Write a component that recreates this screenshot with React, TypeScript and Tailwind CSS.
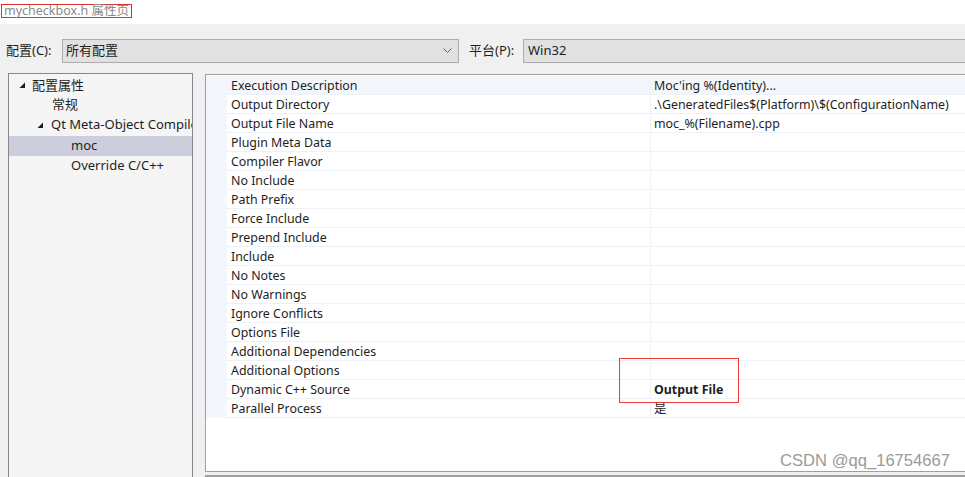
import React from "react";

const rows: { name: string; value?: string; bold?: boolean }[] = [
  { name: "Execution Description", value: "Moc'ing %(Identity)..." },
  { name: "Output Directory", value: ".\\GeneratedFiles$(Platform)\\$(ConfigurationName)" },
  { name: "Output File Name", value: "moc_%(Filename).cpp" },
  { name: "Plugin Meta Data" },
  { name: "Compiler Flavor" },
  { name: "No Include" },
  { name: "Path Prefix" },
  { name: "Force Include" },
  { name: "Prepend Include" },
  { name: "Include" },
  { name: "No Notes" },
  { name: "No Warnings" },
  { name: "Ignore Conflicts" },
  { name: "Options File" },
  { name: "Additional Dependencies" },
  { name: "Additional Options" },
  { name: "Dynamic C++ Source", value: "Output File", bold: true },
  { name: "Parallel Process", value: "是" },
];

function Tri() {
  return (
    <svg width="7" height="7" viewBox="0 0 7 7" className="shrink-0">
      <polygon points="6,0.5 6,6 0.5,6" fill="#1e1e1e" />
    </svg>
  );
}

export default function App() {
  return (
    <div
      className="relative w-[965px] h-[477px] overflow-hidden bg-[#f0f0f0] text-[13px] text-[#1e1e1e]"
      style={{ fontFamily: '"Noto Sans", "Noto Sans CJK SC", sans-serif' }}
    >
      {/* title bar */}
      <div className="h-[24px] bg-white flex items-start pl-[1px] pt-[4px]">
        <div className="border border-[#e03030] h-[14px] w-[131px] flex items-center pl-[2px] text-[12.5px] leading-[12px] text-[#8a8a8a] whitespace-nowrap">
          mycheckbox.h 属性页
        </div>
      </div>

      {/* configuration row */}
      <div className="h-[49px] flex items-start pt-[15px]">
        <div className="w-[62px] pl-[6px] h-[24px] flex items-center">配置(C):</div>
        <div className="w-[397px] h-[24px] border border-[#adadad] bg-[#e1e1e1] flex items-center pl-[3px] pr-[6px] justify-between">
          <span>所有配置</span>
          <svg width="9" height="6" viewBox="0 0 9 6">
            <polyline points="0.5,0.5 4.5,4.5 8.5,0.5" fill="none" stroke="#606060" strokeWidth="1" />
          </svg>
        </div>
        <div className="w-[64px] pl-[10px] h-[24px] flex items-center">平台(P):</div>
        <div className="flex-1 h-[24px] border border-r-0 border-[#adadad] bg-[#e1e1e1] flex items-center pl-[4px]">
          Win32
        </div>
      </div>

      {/* main area */}
      <div className="flex h-[404px]">
        {/* tree */}
        <div className="ml-[8px] w-[185px] h-full border border-b-0 border-[#828790] bg-[#f5f5f5] pt-[2px]">
          <div className="h-[19px] flex items-center pl-[10px] gap-[6px]">
            <Tri />
            <span>配置属性</span>
          </div>
          <div className="h-[19px] flex items-center pl-[43px]">常规</div>
          <div className="h-[22px] flex items-center pl-[28px] gap-[7px] whitespace-nowrap overflow-hidden">
            <Tri />
            <span>Qt Meta-Object Compiler</span>
          </div>
          <div className="h-[20px] flex items-center pl-[62px] bg-[#cccedb]">moc</div>
          <div className="h-[20px] flex items-center pl-[62px]">Override C/C++</div>
        </div>

        {/* property grid */}
        <div className="ml-[12px] flex-1 flex flex-col">
          <div className="mt-[1px] h-[398px] border border-r-0 border-[#a0a0a0] bg-white pt-[1px] text-[12.4px]">
            {rows.map((r, i) => (
              <div key={r.name} className="h-[19px] flex">
                <div className="w-[21px] bg-[#f3f6fb]" />
                <div
                  className={`flex-1 flex border-b border-[#eef1f6] pt-[2px] ${i === 0 ? "bg-[#f3f6fb]" : "bg-white"}`}
                >
                  <div className="w-[424px] pl-[4px] flex items-center whitespace-nowrap border-r border-[#eef1f6]">
                    {r.name}
                  </div>
                  <div
                    className={`flex-1 pl-[3px] flex items-center whitespace-nowrap ${r.bold ? "font-bold" : ""}`}
                  >
                    {r.value ?? ""}
                  </div>
                </div>
              </div>
            ))}
          </div>
          <div className="mt-[3px] border-t-2 border-[#a0a0a0]" />
        </div>
      </div>

      {/* red annotation box */}
      <div className="absolute left-[619px] top-[358px] w-[120px] h-[45px] border border-[#f03a3a]" />

      {/* watermark */}
      <div
        className="absolute left-[780px] top-[449px] text-[16.6px] text-[#9a9a9a] whitespace-nowrap"
        style={{ fontFamily: '"Liberation Sans", sans-serif' }}
      >
        CSDN @qq_16754667
      </div>
    </div>
  );
}
